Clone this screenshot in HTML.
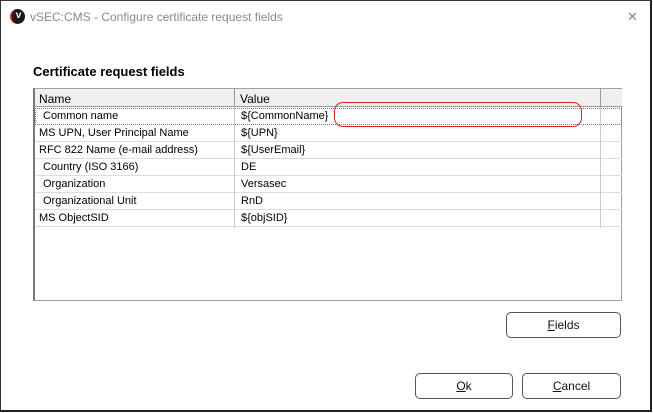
<!DOCTYPE html>
<html><head><style>
*{margin:0;padding:0;box-sizing:border-box}
body{width:653px;height:413px;background:#fff;font-family:"Liberation Sans",sans-serif;position:relative;overflow:hidden}
.frame{position:absolute;left:0;top:0;width:652px;height:412px;border:1px solid #333;border-right:2px solid #222;border-bottom:2px solid #222}
.t{position:absolute;font-size:11px;color:#000;white-space:nowrap}
.title{position:absolute;left:30px;top:10px;font-size:12px;color:#8a8a8a}
.logo{position:absolute;left:10px;top:9px;width:15px;height:15px;border-radius:50%;background:#1a1a1a;border-left:2px solid #c22;color:#fff;font-size:10px;font-weight:bold;text-align:center;line-height:14px}
.close{position:absolute;left:627px;top:9px;font-size:13px;color:#888;font-weight:300}
h1{position:absolute;left:33px;top:64px;font-size:13px;font-weight:bold;color:#000}
.grid{position:absolute;left:33px;top:88px;width:589px;height:213px;border:1px solid #a0a0a0;border-left:2px solid #777;background:#fff}
.hdr{position:absolute;left:0;top:0;width:587px;height:18px;background:#efefef;border-bottom:1px solid #999}
.row{position:absolute;left:0;width:587px;height:17px;border-bottom:1px solid #ddd}
.vl{position:absolute;top:0;width:1px;background:#ccc}
.btn{position:absolute;height:26px;border:1px solid #555;border-radius:5px;background:#fff;font-size:12px;text-align:center;line-height:24px;color:#111}
.red{position:absolute;left:334px;top:102px;width:248px;height:25px;border:1.5px solid #e02020;border-radius:9px}
</style></head><body>
<div class="frame"></div>
<div class="logo">v</div>
<div class="title">vSEC:CMS - Configure certificate request fields</div>
<div class="close">✕</div>
<h1>Certificate request fields</h1>
<div class="grid">
 <div class="hdr"></div>
 <div class="vl" style="left:199px;height:18px;background:#999"></div>
 <div class="vl" style="left:565px;height:18px;background:#999"></div>
 <div class="row" style="top:19px;border:1px dotted #777"></div>
 <div class="row" style="top:36px"></div>
 <div class="row" style="top:53px"></div>
 <div class="row" style="top:70px"></div>
 <div class="row" style="top:87px"></div>
 <div class="row" style="top:104px"></div>
 <div class="row" style="top:121px"></div>
 <div class="vl" style="left:199px;top:18px;height:121px"></div>
 <div class="vl" style="left:565px;top:18px;height:121px"></div>
</div>
<div class="t" style="left:39px;top:92px;font-size:12px">Name</div>
<div class="t" style="left:240px;top:92px;font-size:12px">Value</div>
<div class="t" style="left:43px;top:110px">Common name</div><div class="t" style="left:241px;top:110px">${CommonName}</div>
<div class="t" style="left:39px;top:127px">MS UPN, User Principal Name</div><div class="t" style="left:241px;top:127px">${UPN}</div>
<div class="t" style="left:39px;top:144px">RFC 822 Name (e-mail address)</div><div class="t" style="left:241px;top:144px">${UserEmail}</div>
<div class="t" style="left:43px;top:161px">Country (ISO 3166)</div><div class="t" style="left:241px;top:161px">DE</div>
<div class="t" style="left:43px;top:178px">Organization</div><div class="t" style="left:241px;top:178px">Versasec</div>
<div class="t" style="left:43px;top:195px">Organizational Unit</div><div class="t" style="left:241px;top:195px">RnD</div>
<div class="t" style="left:39px;top:212px">MS ObjectSID</div><div class="t" style="left:241px;top:212px">${objSID}</div>
<div class="red"></div>
<div class="btn" style="left:506px;top:312px;width:115px"><u>F</u>ields</div>
<div class="btn" style="left:415px;top:373px;width:98px"><u>O</u>k</div>
<div class="btn" style="left:522px;top:373px;width:99px"><u>C</u>ancel</div>
</body></html>
